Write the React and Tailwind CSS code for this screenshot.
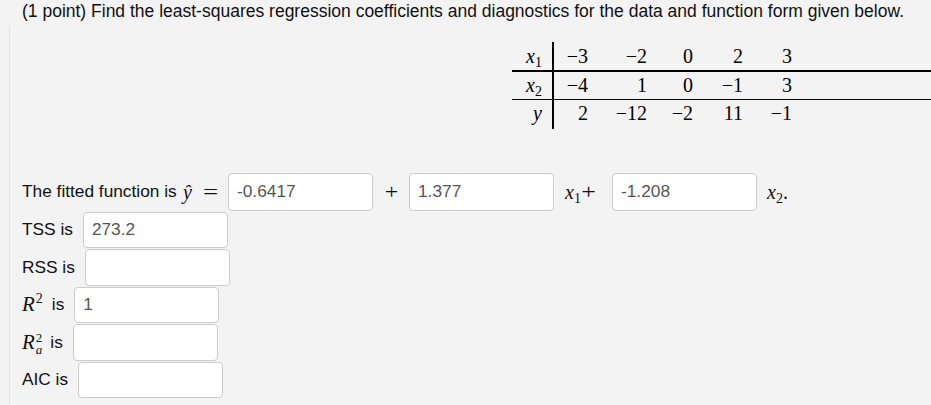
import React from "react";

const sans = { fontFamily: '"Liberation Sans", Arial, sans-serif' };

function Box({ value, className = "", h = "h-[37px]" }) {
  return (
    <div
      className={`w-[145px] ${h} shrink-0 bg-white border border-[#cccccc] rounded-[4px] pl-[8px] flex items-center text-[17.3px] text-[#555555] ${className}`}
    >
      {value}
    </div>
  );
}

function X({ i }) {
  return (
    <span className="whitespace-nowrap">
      <span className="italic">x</span>
      <span className="text-[14px] relative top-[4px]">{i}</span>
    </span>
  );
}

const cols = [34, 59, 46, 50, 49];

function Row({ label, vals, rowClass, lh }) {
  return (
    <div className={`flex ${rowClass}`}>
      <div className={`w-[42px] border-r-2 border-black text-right pr-[10px] ${lh}`}>{label}</div>
      {vals.map((v, k) => (
        <div key={k} className={`text-right ${lh}`} style={{ width: cols[k] }}>
          {v}
        </div>
      ))}
      <div className="w-[8px]" />
    </div>
  );
}

export default function App() {
  const serif = "font-['Liberation_Serif',serif]";
  return (
    <div className="w-[931px] h-[405px] bg-[#f3f3f3] text-[#111111] flex flex-col overflow-hidden" style={sans}>
      <div className="h-[26px] pl-[22px] pt-[1px] text-[17.5px] leading-[20px] whitespace-nowrap">
        (1 point) Find the least-squares regression coefficients and diagnostics for the data and function form given below.
      </div>
      <div className="flex-1 ml-[9px] border-l border-[#e2e2e2] pl-[12px] flex flex-col">
        <div className={`mt-[16px] ml-[490px] text-[20px] ${serif} text-black`}>
          <Row
            label={<X i="1" />}
            vals={["−3", "−2", "0", "2", "3"]}
            rowClass="border-b-2 border-black h-[30px]"
            lh="leading-[28px]"
          />
          <Row
            label={<X i="2" />}
            vals={["−4", "1", "0", "−1", "3"]}
            rowClass="border-b border-black h-[28px]"
            lh="leading-[27px]"
          />
          <Row
            label={<span className="italic">y</span>}
            vals={["2", "−12", "−2", "11", "−1"]}
            rowClass="h-[29px]"
            lh="leading-[26px]"
          />
        </div>

        <div className="mt-[44px] flex flex-col gap-[1px] text-[17.3px]">
          <div className="flex items-center h-[38px] whitespace-nowrap">
            <span className="w-[155px] shrink-0">The fitted function is</span>
            <span className={`${serif} italic text-[20px] w-[10px] ml-[6px] shrink-0`}>ŷ</span>
            <span className={`${serif} text-[20px] ml-[10px] w-[15px] shrink-0 text-center`}>
              <span className="inline-block scale-x-[1.35]">=</span>
            </span>
            <Box value="-0.6417" h="h-[38px]" className="ml-[10px]" />
            <span className={`${serif} text-[20px] ml-[12px] w-[13px] shrink-0 text-center`}>
              <span className="inline-block scale-x-[1.2]">+</span>
            </span>
            <Box value="1.377" h="h-[38px]" className="ml-[11px]" />
            <span className={`${serif} text-[20px] ml-[11px] w-[37px] shrink-0`}>
              <X i="1" />
              <span className="inline-block scale-x-[1.3] ml-[2px]">+</span>
            </span>
            <Box value="-1.208" h="h-[38px]" className="ml-[10px]" />
            <span className={`${serif} text-[20px] ml-[10px]`}>
              <X i="2" />.
            </span>
          </div>
          <div className="flex items-center gap-[10px] h-[36px]">
            <span>TSS is</span>
            <Box value="273.2" h="h-[36px]" />
          </div>
          <div className="flex items-center gap-[10px] h-[37px]">
            <span>RSS is</span>
            <Box value="" h="h-[37px]" />
          </div>
          <div className="flex items-center gap-[10px] h-[36px]">
            <span className="flex items-center">
              <span className={`${serif} text-[21px] italic`}>R</span>
              <span className={`${serif} text-[14px] relative top-[-7px] ml-[1px]`}>2</span>
              <span className="ml-[9px]">is</span>
            </span>
            <Box value="1" h="h-[36px]" />
          </div>
          <div className="flex items-center gap-[10px] h-[37px]">
            <span className="flex items-center">
              <span className={`${serif} text-[21px] italic pr-[1px]`}>R</span>
              <span className={`${serif} inline-flex flex-col text-[13px] leading-[11px] gap-[1px] relative top-[1px]`}>
                <span>2</span>
                <span className="italic">a</span>
              </span>
              <span className="ml-[8px]">is</span>
            </span>
            <Box value="" h="h-[37px]" />
          </div>
          <div className="flex items-center gap-[10px] h-[36px]">
            <span>AIC is</span>
            <Box value="" h="h-[36px]" />
          </div>
        </div>
      </div>
    </div>
  );
}
